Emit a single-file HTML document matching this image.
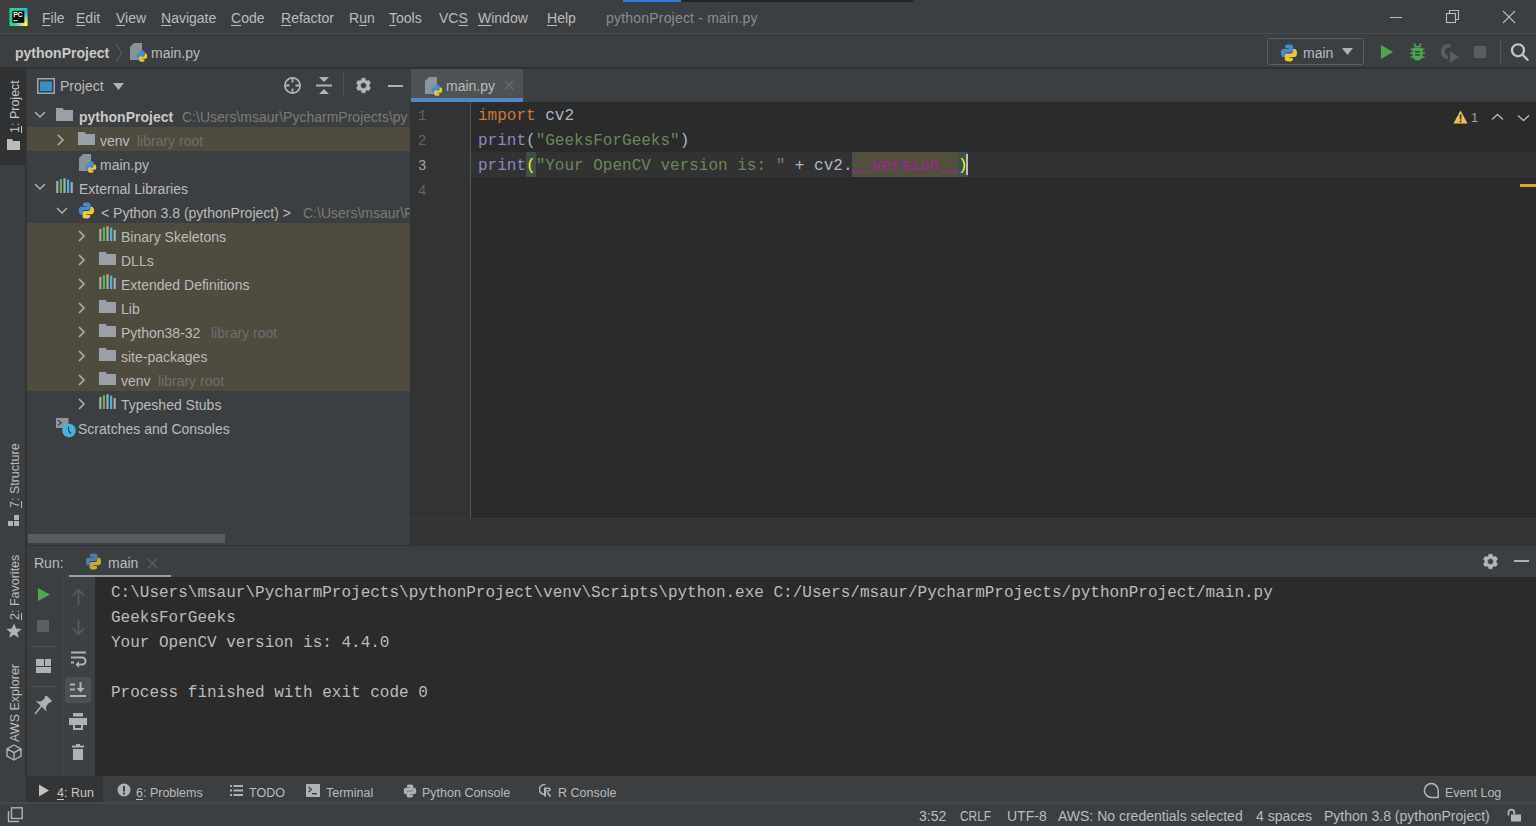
<!DOCTYPE html>
<html><head><meta charset="utf-8">
<style>
*{margin:0;padding:0;box-sizing:border-box}
html,body{width:1536px;height:826px;overflow:hidden;background:#3C3F41;font-family:"Liberation Sans",sans-serif;color:#BBBBBB}
.a{position:absolute}
.t{position:absolute;white-space:nowrap;font-size:14px;line-height:16px}
.v{position:absolute;white-space:nowrap;font-size:12.5px;line-height:14px;transform-origin:0 0;transform:rotate(-90deg)}
.code{position:absolute;white-space:pre;font-family:"Liberation Mono",monospace;font-size:16px;line-height:25px}
u{text-decoration:underline;text-underline-offset:2px;text-decoration-thickness:1px}
</style></head><body>
<div class="a" style="left:0px;top:0px;width:1536px;height:33px;background:#3C3F41;"></div>
<div class="a" style="left:0px;top:33px;width:1536px;height:1px;background:#4B4F51;"></div>
<svg class="a" style="left:9px;top:7px" width="19" height="19" viewBox="0 0 19 19" ><defs><linearGradient id="lg" x1="0" y1="0" x2="1" y2="0"><stop offset="0.3" stop-color="#21D789"/><stop offset="1" stop-color="#2FB4E0"/></linearGradient>
<radialGradient id="rg" cx="1" cy="1" r="0.75"><stop offset="0.2" stop-color="#FCF84A"/><stop offset="1" stop-color="#FCF84A" stop-opacity="0"/></radialGradient></defs>
<rect x="0.5" y="1" width="18" height="18" fill="url(#lg)"/><rect x="0.5" y="1" width="18" height="18" fill="url(#rg)"/><rect x="3.3" y="3.8" width="12" height="12" fill="#000"/>
<text x="4.2" y="10.3" font-family="Liberation Sans" font-weight="bold" font-size="7" fill="#fff" letter-spacing="-0.4">PC</text><rect x="4.5" y="13.2" width="4" height="1" fill="#fff"/></svg>
<div class="t" style="left:42px;top:10px;"><u>F</u>ile</div>
<div class="t" style="left:76px;top:10px;"><u>E</u>dit</div>
<div class="t" style="left:116px;top:10px;"><u>V</u>iew</div>
<div class="t" style="left:161px;top:10px;"><u>N</u>avigate</div>
<div class="t" style="left:231px;top:10px;"><u>C</u>ode</div>
<div class="t" style="left:281px;top:10px;"><u>R</u>efactor</div>
<div class="t" style="left:349px;top:10px;">R<u>u</u>n</div>
<div class="t" style="left:389px;top:10px;"><u>T</u>ools</div>
<div class="t" style="left:439px;top:10px;">VC<u>S</u></div>
<div class="t" style="left:478px;top:10px;"><u>W</u>indow</div>
<div class="t" style="left:547px;top:10px;"><u>H</u>elp</div>
<div class="t" style="left:606px;top:10px;color:#8A8C8E;letter-spacing:0.2px">pythonProject - main.py</div>
<div class="a" style="left:623px;top:0px;width:290px;height:2px;background:#232425;"></div>
<div class="a" style="left:623px;top:0px;width:58px;height:2px;background:#2F7ED8;"></div>
<div class="a" style="left:1390px;top:17px;width:12px;height:1px;background:#BBBBBB;"></div>
<svg class="a" style="left:1445px;top:9px" width="15" height="15" viewBox="0 0 15 15" fill="none" stroke="#BBBBBB" stroke-width="1.1"><rect x="1.5" y="4.5" width="9" height="9"/><path d="M4.5 4.5 V1.5 H13.5 V10.5 H10.5"/></svg>
<svg class="a" style="left:1502px;top:10px" width="14" height="14" viewBox="0 0 14 14" stroke="#BBBBBB" stroke-width="1.1"><path d="M1 1 L13 13 M13 1 L1 13"/></svg>
<div class="a" style="left:0px;top:34px;width:1536px;height:33px;background:#3C3F41;"></div>
<div class="a" style="left:0px;top:67px;width:1536px;height:2px;background:#323232;"></div>
<div class="t" style="left:15px;top:45px;font-weight:bold;color:#C8C8C8">pythonProject</div>
<svg class="a" style="left:115px;top:43px" width="8" height="20" viewBox="0 0 8 20" ><path d="M1 1 L6.5 10 L1 19" fill="none" stroke="#606366" stroke-width="1"/></svg>
<svg class="a" style="left:130px;top:43px" width="18" height="19" viewBox="0 0 18 19" ><path d="M4 0 H12 V17 H0 V4 Z" fill="#9AA7B0" opacity="0.8"/><g transform="translate(6 7.2) scale(0.66)"><path d="M8.8 0.5 C5 0.5 5.3 2.1 5.3 2.1 V4.2 H8.9 V4.9 H3.8 C3.8 4.9 1 4.6 1 8.9 C1 13.2 3.4 13.1 3.4 13.1 H4.9 V11.1 C4.9 11.1 4.8 8.6 7.3 8.6 H10.9 C10.9 8.6 13.2 8.6 13.2 6.4 V2.7 C13.2 2.7 13.5 0.5 8.8 0.5 Z" fill="#3E8ED0"/><path d="M9.2 17.5 C13 17.5 12.7 15.9 12.7 15.9 V13.8 H9.1 V13.1 H14.2 C14.2 13.1 17 13.4 17 9.1 C17 4.8 14.6 4.9 14.6 4.9 H13.1 V6.9 C13.1 6.9 13.2 9.4 10.7 9.4 H7.1 C7.1 9.4 4.8 9.4 4.8 11.6 V15.3 C4.8 15.3 4.5 17.5 9.2 17.5 Z" fill="#F2C62F"/></g></svg>
<div class="t" style="left:151px;top:45px;">main.py</div>
<div class="a" style="left:1267px;top:38px;width:97px;height:27px;background:#3C3F41;border:1px solid #5E6060;border-radius:3px"></div>
<svg class="a" style="left:1280px;top:44px" width="18" height="18" viewBox="0 0 18 18" ><path d="M8.8 0.5 C5 0.5 5.3 2.1 5.3 2.1 V4.2 H8.9 V4.9 H3.8 C3.8 4.9 1 4.6 1 8.9 C1 13.2 3.4 13.1 3.4 13.1 H4.9 V11.1 C4.9 11.1 4.8 8.6 7.3 8.6 H10.9 C10.9 8.6 13.2 8.6 13.2 6.4 V2.7 C13.2 2.7 13.5 0.5 8.8 0.5 Z" fill="#3E8ED0"/><path d="M9.2 17.5 C13 17.5 12.7 15.9 12.7 15.9 V13.8 H9.1 V13.1 H14.2 C14.2 13.1 17 13.4 17 9.1 C17 4.8 14.6 4.9 14.6 4.9 H13.1 V6.9 C13.1 6.9 13.2 9.4 10.7 9.4 H7.1 C7.1 9.4 4.8 9.4 4.8 11.6 V15.3 C4.8 15.3 4.5 17.5 9.2 17.5 Z" fill="#F2C62F"/></svg>
<div class="t" style="left:1303px;top:45px;">main</div>
<svg class="a" style="left:1342px;top:48px" width="11" height="8" viewBox="0 0 11 8" ><path d="M0 0 H11 L5.5 7 Z" fill="#AFB1B3"/></svg>
<svg class="a" style="left:1380px;top:44px" width="14" height="16" viewBox="0 0 14 16" ><path d="M1 1 L13 8 L1 15 Z" fill="#4DA453"/></svg>
<svg class="a" style="left:1409px;top:43px" width="17" height="18" viewBox="0 0 17 18" ><path d="M5 0.5 L6.5 3 M12 0.5 L10.5 3" stroke="#4DA453" stroke-width="1.5"/>
<path d="M4.5 4.5 C4.5 2.5 12.5 2.5 12.5 4.5 Z" fill="#4DA453"/>
<path d="M3.5 5 H13.5 V13 C13.5 15.5 11 17.5 8.5 17.5 C6 17.5 3.5 15.5 3.5 13 Z" fill="#4DA453"/>
<path d="M1.5 6.5 H15.5 M1 10.2 H16 M1.5 14 H15.5" stroke="#4DA453" stroke-width="1.6"/>
<path d="M6 8.8 H11 M6 12 H11" stroke="#2E4A30" stroke-width="1.4"/></svg>
<svg class="a" style="left:1439px;top:42px" width="22" height="22" viewBox="0 0 22 22" ><path d="M9 2 C4.5 2 2 5 2 9.5 C2 14 4.5 17 9 17 L9 13.5 C7 13.5 6 12 6 9.5 C6 7 7 5.5 9 5.5 H11.5 V2 Z" fill="#5A5D5F"/><path d="M11 9 L20 15 L11 21 Z" fill="#5A5D5F"/></svg>
<div class="a" style="left:1474px;top:46px;width:12px;height:12px;background:#5A5D5F;"></div>
<div class="a" style="left:1500px;top:40px;width:1px;height:24px;background:#515658;"></div>
<svg class="a" style="left:1509px;top:42px" width="21" height="21" viewBox="0 0 21 21" fill="none" stroke="#C4C4C4" stroke-width="2.3"><circle cx="9" cy="8.3" r="6"/><path d="M13.4 12.7 L18.6 17.8" stroke-linecap="round"/></svg>
<div class="a" style="left:0px;top:69px;width:26px;height:707px;background:#3C3F41;"></div>
<div class="a" style="left:0px;top:69px;width:25px;height:96px;background:#2F3133;"></div>
<div class="a" style="left:25px;top:69px;width:2px;height:707px;background:#323435;"></div>
<div class="v" style="left:8px;top:133px;color:#C8C8C8"><u>1</u>: Project</div>
<svg class="a" style="left:7px;top:139px" width="13" height="11" viewBox="0 0 13 11" ><path d="M0 0 H5 L6 2 H13 V11 H0 Z" fill="#BBBBBB"/></svg>
<div class="v" style="left:8px;top:508px"><u>7</u>: Structure</div>
<svg class="a" style="left:8px;top:515px" width="12" height="12" viewBox="0 0 12 12" fill="#AFB1B3"><rect x="6" y="0" width="5" height="5"/><rect x="0" y="6" width="5" height="5"/><rect x="6" y="6" width="5" height="5"/></svg>
<div class="v" style="left:8px;top:620px"><u>2</u>: Favorites</div>
<svg class="a" style="left:6px;top:623px" width="16" height="16" viewBox="0 0 16 16" ><path d="M8 0.5 L10.2 5.6 L15.6 5.9 L11.4 9.4 L12.8 14.8 L8 11.8 L3.2 14.8 L4.6 9.4 L0.4 5.9 L5.8 5.6 Z" fill="#AFB1B3"/></svg>
<div class="v" style="left:8px;top:742px">AWS Explorer</div>
<svg class="a" style="left:6px;top:744px" width="16" height="17" viewBox="0 0 16 17" fill="none" stroke="#AFB1B3" stroke-width="1.4" stroke-linejoin="round"><path d="M8 1 L15 4.8 V12.2 L8 16 L1 12.2 V4.8 Z M1 4.8 L8 8.6 L15 4.8 M8 8.6 V16"/></svg>
<div class="a" style="left:27px;top:69px;width:383px;height:476px;overflow:hidden"><div class="a" style="left:-27px;top:-69px;width:1536px;height:826px"><div class="a" style="left:27px;top:69px;width:384px;height:476px;background:#3C3F41;"></div><svg class="a" style="left:37px;top:78px" width="18" height="16" viewBox="0 0 18 16" ><rect x="0.75" y="0.75" width="16.5" height="14.5" fill="none" stroke="#9AA7B0" stroke-width="1.5"/><rect x="3" y="3.5" width="12" height="9.5" fill="#3592C4"/></svg><div class="t" style="left:60px;top:78px;">Project</div><svg class="a" style="left:113px;top:83px" width="11" height="8" viewBox="0 0 11 8" ><path d="M0 0 H11 L5.5 7 Z" fill="#AFB1B3"/></svg><svg class="a" style="left:283px;top:76px" width="19" height="19" viewBox="0 0 19 19" fill="none" stroke="#AFB1B3" stroke-width="1.8"><circle cx="9.5" cy="9.5" r="7.6"/><path d="M9.5 1.5 V6.5 M9.5 12.5 V17.5 M1.5 9.5 H6.5 M12.5 9.5 H17.5"/></svg><svg class="a" style="left:316px;top:77px" width="16" height="17" viewBox="0 0 16 17" fill="#AFB1B3"><path d="M3 0 H13 L8 5 Z M3 17 H13 L8 12 Z"/><rect x="0" y="7.5" width="16" height="2"/></svg><div class="a" style="left:343px;top:72px;width:1px;height:24px;background:#4E5254;"></div><svg class="a" style="left:355px;top:77px" width="17" height="17" viewBox="0 0 17 17" ><path fill="#B4B6B8" fill-rule="evenodd" stroke="#B4B6B8" stroke-width="0.6" stroke-linejoin="round" d="M10.54 13.82 L10.11 15.72 L6.89 15.72 L6.46 13.82 L4.91 12.93 L3.05 13.51 L1.44 10.71 L2.87 9.39 L2.87 7.61 L1.44 6.29 L3.05 3.49 L4.91 4.07 L6.46 3.18 L6.89 1.28 L10.11 1.28 L10.54 3.18 L12.09 4.07 L13.95 3.49 L15.56 6.29 L14.13 7.61 L14.13 9.39 L15.56 10.71 L13.95 13.51 L12.09 12.93 Z M11.5 8.5 A3.0 3.0 0 1 0 5.5 8.5 A3.0 3.0 0 1 0 11.5 8.5 Z"/></svg><div class="a" style="left:388px;top:85px;width:15px;height:2px;background:#AFB1B3;"></div><div class="a" style="left:27px;top:127px;width:383px;height:24px;background:#4F4B3F;"></div><div class="a" style="left:27px;top:223px;width:383px;height:168px;background:#4F4B3F;"></div><svg class="a" style="left:34px;top:111px" width="12" height="8" viewBox="0 0 12 8" ><path d="M1 1 L6 6 L11 1" fill="none" stroke="#AFB1B3" stroke-width="1.5"/></svg><svg class="a" style="left:56px;top:108px" width="17" height="14" viewBox="0 0 17 14" ><path d="M0 0 H6.5 L8 2 H17 V13 H0 Z" fill="#9AA1A6"/></svg><div class="t" style="left:79px;top:109px;font-weight:bold;color:#C8C8C8">pythonProject</div><div class="t" style="left:182px;top:109px;color:#7A7A7A">C:\Users\msaur\PycharmProjects\py</div><svg class="a" style="left:57px;top:134px" width="8" height="12" viewBox="0 0 8 12" ><path d="M1 1 L6 6 L1 11" fill="none" stroke="#AFB1B3" stroke-width="1.5"/></svg><svg class="a" style="left:78px;top:132px" width="17" height="14" viewBox="0 0 17 14" ><path d="M0 0 H6.5 L8 2 H17 V13 H0 Z" fill="#9AA1A6"/></svg><div class="t" style="left:100px;top:133px;">venv</div><div class="t" style="left:137px;top:133px;color:#6E6E6E">library root</div><svg class="a" style="left:79px;top:154px" width="18" height="19" viewBox="0 0 18 19" ><path d="M4 0 H12 V17 H0 V4 Z" fill="#9AA7B0" opacity="0.8"/><g transform="translate(6 7.2) scale(0.66)"><path d="M8.8 0.5 C5 0.5 5.3 2.1 5.3 2.1 V4.2 H8.9 V4.9 H3.8 C3.8 4.9 1 4.6 1 8.9 C1 13.2 3.4 13.1 3.4 13.1 H4.9 V11.1 C4.9 11.1 4.8 8.6 7.3 8.6 H10.9 C10.9 8.6 13.2 8.6 13.2 6.4 V2.7 C13.2 2.7 13.5 0.5 8.8 0.5 Z" fill="#3E8ED0"/><path d="M9.2 17.5 C13 17.5 12.7 15.9 12.7 15.9 V13.8 H9.1 V13.1 H14.2 C14.2 13.1 17 13.4 17 9.1 C17 4.8 14.6 4.9 14.6 4.9 H13.1 V6.9 C13.1 6.9 13.2 9.4 10.7 9.4 H7.1 C7.1 9.4 4.8 9.4 4.8 11.6 V15.3 C4.8 15.3 4.5 17.5 9.2 17.5 Z" fill="#F2C62F"/></g></svg><div class="t" style="left:100px;top:157px;">main.py</div><svg class="a" style="left:34px;top:183px" width="12" height="8" viewBox="0 0 12 8" ><path d="M1 1 L6 6 L11 1" fill="none" stroke="#AFB1B3" stroke-width="1.5"/></svg><svg class="a" style="left:56px;top:178px" width="18" height="15" viewBox="0 0 18 15" ><rect x="0.2" y="3" width="2.2" height="12" fill="#A4ABB2"/><rect x="3.8" y="1.2" width="2.2" height="13.8" fill="#62B543"/><rect x="7.4" y="0.3" width="2.2" height="14.7" fill="#A4ABB2"/><rect x="11" y="1.6" width="2.2" height="13.4" fill="#40B6E0"/><rect x="14.6" y="4" width="2.2" height="11" fill="#A4ABB2"/></svg><div class="t" style="left:79px;top:181px;">External Libraries</div><svg class="a" style="left:56px;top:207px" width="12" height="8" viewBox="0 0 12 8" ><path d="M1 1 L6 6 L11 1" fill="none" stroke="#AFB1B3" stroke-width="1.5"/></svg><svg class="a" style="left:78px;top:202px" width="17" height="17" viewBox="0 0 18 18" ><path d="M8.8 0.5 C5 0.5 5.3 2.1 5.3 2.1 V4.2 H8.9 V4.9 H3.8 C3.8 4.9 1 4.6 1 8.9 C1 13.2 3.4 13.1 3.4 13.1 H4.9 V11.1 C4.9 11.1 4.8 8.6 7.3 8.6 H10.9 C10.9 8.6 13.2 8.6 13.2 6.4 V2.7 C13.2 2.7 13.5 0.5 8.8 0.5 Z" fill="#3E8ED0"/><path d="M9.2 17.5 C13 17.5 12.7 15.9 12.7 15.9 V13.8 H9.1 V13.1 H14.2 C14.2 13.1 17 13.4 17 9.1 C17 4.8 14.6 4.9 14.6 4.9 H13.1 V6.9 C13.1 6.9 13.2 9.4 10.7 9.4 H7.1 C7.1 9.4 4.8 9.4 4.8 11.6 V15.3 C4.8 15.3 4.5 17.5 9.2 17.5 Z" fill="#F2C62F"/></svg><div class="t" style="left:101px;top:205px;">&lt; Python 3.8 (pythonProject) &gt;</div><div class="t" style="left:303px;top:205px;color:#7A7A7A">C:\Users\msaur\PycharmProjects</div><svg class="a" style="left:78px;top:230px" width="8" height="12" viewBox="0 0 8 12" ><path d="M1 1 L6 6 L1 11" fill="none" stroke="#AFB1B3" stroke-width="1.5"/></svg><svg class="a" style="left:99px;top:226px" width="18" height="15" viewBox="0 0 18 15" ><rect x="0.2" y="3" width="2.2" height="12" fill="#A4ABB2"/><rect x="3.8" y="1.2" width="2.2" height="13.8" fill="#62B543"/><rect x="7.4" y="0.3" width="2.2" height="14.7" fill="#A4ABB2"/><rect x="11" y="1.6" width="2.2" height="13.4" fill="#40B6E0"/><rect x="14.6" y="4" width="2.2" height="11" fill="#A4ABB2"/></svg><div class="t" style="left:121px;top:229px;">Binary Skeletons</div><svg class="a" style="left:78px;top:254px" width="8" height="12" viewBox="0 0 8 12" ><path d="M1 1 L6 6 L1 11" fill="none" stroke="#AFB1B3" stroke-width="1.5"/></svg><svg class="a" style="left:99px;top:252px" width="17" height="14" viewBox="0 0 17 14" ><path d="M0 0 H6.5 L8 2 H17 V13 H0 Z" fill="#9AA1A6"/></svg><div class="t" style="left:121px;top:253px;">DLLs</div><svg class="a" style="left:78px;top:278px" width="8" height="12" viewBox="0 0 8 12" ><path d="M1 1 L6 6 L1 11" fill="none" stroke="#AFB1B3" stroke-width="1.5"/></svg><svg class="a" style="left:99px;top:274px" width="18" height="15" viewBox="0 0 18 15" ><rect x="0.2" y="3" width="2.2" height="12" fill="#A4ABB2"/><rect x="3.8" y="1.2" width="2.2" height="13.8" fill="#62B543"/><rect x="7.4" y="0.3" width="2.2" height="14.7" fill="#A4ABB2"/><rect x="11" y="1.6" width="2.2" height="13.4" fill="#40B6E0"/><rect x="14.6" y="4" width="2.2" height="11" fill="#A4ABB2"/></svg><div class="t" style="left:121px;top:277px;">Extended Definitions</div><svg class="a" style="left:78px;top:302px" width="8" height="12" viewBox="0 0 8 12" ><path d="M1 1 L6 6 L1 11" fill="none" stroke="#AFB1B3" stroke-width="1.5"/></svg><svg class="a" style="left:99px;top:300px" width="17" height="14" viewBox="0 0 17 14" ><path d="M0 0 H6.5 L8 2 H17 V13 H0 Z" fill="#9AA1A6"/></svg><div class="t" style="left:121px;top:301px;">Lib</div><svg class="a" style="left:78px;top:326px" width="8" height="12" viewBox="0 0 8 12" ><path d="M1 1 L6 6 L1 11" fill="none" stroke="#AFB1B3" stroke-width="1.5"/></svg><svg class="a" style="left:99px;top:324px" width="17" height="14" viewBox="0 0 17 14" ><path d="M0 0 H6.5 L8 2 H17 V13 H0 Z" fill="#9AA1A6"/></svg><div class="t" style="left:121px;top:325px;">Python38-32</div><div class="t" style="left:211px;top:325px;color:#6E6E6E">library root</div><svg class="a" style="left:78px;top:350px" width="8" height="12" viewBox="0 0 8 12" ><path d="M1 1 L6 6 L1 11" fill="none" stroke="#AFB1B3" stroke-width="1.5"/></svg><svg class="a" style="left:99px;top:348px" width="17" height="14" viewBox="0 0 17 14" ><path d="M0 0 H6.5 L8 2 H17 V13 H0 Z" fill="#9AA1A6"/></svg><div class="t" style="left:121px;top:349px;">site-packages</div><svg class="a" style="left:78px;top:374px" width="8" height="12" viewBox="0 0 8 12" ><path d="M1 1 L6 6 L1 11" fill="none" stroke="#AFB1B3" stroke-width="1.5"/></svg><svg class="a" style="left:99px;top:372px" width="17" height="14" viewBox="0 0 17 14" ><path d="M0 0 H6.5 L8 2 H17 V13 H0 Z" fill="#9AA1A6"/></svg><div class="t" style="left:121px;top:373px;">venv</div><div class="t" style="left:158px;top:373px;color:#6E6E6E">library root</div><svg class="a" style="left:78px;top:398px" width="8" height="12" viewBox="0 0 8 12" ><path d="M1 1 L6 6 L1 11" fill="none" stroke="#AFB1B3" stroke-width="1.5"/></svg><svg class="a" style="left:99px;top:394px" width="18" height="15" viewBox="0 0 18 15" ><rect x="0.2" y="3" width="2.2" height="12" fill="#A4ABB2"/><rect x="3.8" y="1.2" width="2.2" height="13.8" fill="#62B543"/><rect x="7.4" y="0.3" width="2.2" height="14.7" fill="#A4ABB2"/><rect x="11" y="1.6" width="2.2" height="13.4" fill="#40B6E0"/><rect x="14.6" y="4" width="2.2" height="11" fill="#A4ABB2"/></svg><div class="t" style="left:121px;top:397px;">Typeshed Stubs</div><svg class="a" style="left:56px;top:418px" width="20" height="20" viewBox="0 0 20 20" ><rect x="0" y="0" width="12.5" height="10" fill="#9AA7B0" opacity="0.85"/><path d="M2 2.2 L5.2 4.8 L2 7.4" stroke="#3C3F41" stroke-width="1.2" fill="none"/><circle cx="13" cy="12.5" r="6.8" fill="#40B6E0"/><path d="M12.5 8.5 V13 L15 15.5" stroke="#233A45" stroke-width="1.2" fill="none"/></svg><div class="t" style="left:78px;top:421px;">Scratches and Consoles</div><div class="a" style="left:28px;top:534px;width:197px;height:9px;background:#595B5D;"></div></div></div>
<div class="a" style="left:411px;top:69px;width:1125px;height:32px;background:#3C3F41;"></div>
<div class="a" style="left:411px;top:69px;width:112px;height:33px;background:#4E5254;"></div>
<div class="a" style="left:411px;top:98px;width:112px;height:4px;background:#4A88C7;"></div>
<svg class="a" style="left:425px;top:77px" width="18" height="19" viewBox="0 0 18 19" ><path d="M4 0 H12 V17 H0 V4 Z" fill="#9AA7B0" opacity="0.8"/><g transform="translate(6 7.2) scale(0.66)"><path d="M8.8 0.5 C5 0.5 5.3 2.1 5.3 2.1 V4.2 H8.9 V4.9 H3.8 C3.8 4.9 1 4.6 1 8.9 C1 13.2 3.4 13.1 3.4 13.1 H4.9 V11.1 C4.9 11.1 4.8 8.6 7.3 8.6 H10.9 C10.9 8.6 13.2 8.6 13.2 6.4 V2.7 C13.2 2.7 13.5 0.5 8.8 0.5 Z" fill="#3E8ED0"/><path d="M9.2 17.5 C13 17.5 12.7 15.9 12.7 15.9 V13.8 H9.1 V13.1 H14.2 C14.2 13.1 17 13.4 17 9.1 C17 4.8 14.6 4.9 14.6 4.9 H13.1 V6.9 C13.1 6.9 13.2 9.4 10.7 9.4 H7.1 C7.1 9.4 4.8 9.4 4.8 11.6 V15.3 C4.8 15.3 4.5 17.5 9.2 17.5 Z" fill="#F2C62F"/></g></svg>
<div class="t" style="left:446px;top:78px;">main.py</div>
<svg class="a" style="left:504px;top:80px" width="10" height="10" viewBox="0 0 10 10" ><path d="M1 1 L9 9 M9 1 L1 9" stroke="#6E7072" stroke-width="1.2"/></svg>
<div class="a" style="left:410px;top:102px;width:61px;height:443px;background:#313335;"></div>
<div class="a" style="left:471px;top:102px;width:1065px;height:416px;background:#2B2B2B;"></div>
<div class="a" style="left:471px;top:518px;width:1065px;height:27px;background:#313335;"></div>
<div class="a" style="left:410px;top:518px;width:1126px;height:1px;background:#393B3D;"></div>
<div class="a" style="left:470px;top:102px;width:1px;height:416px;background:#555555;"></div>
<div class="a" style="left:471px;top:152px;width:1065px;height:25px;background:#323232;"></div>
<div class="code" style="left:418px;top:104px;font-size:14px;color:#606366">1</div>
<div class="code" style="left:418px;top:129px;font-size:14px;color:#606366">2</div>
<div class="code" style="left:418px;top:154px;font-size:14px;color:#A4A3A3">3</div>
<div class="code" style="left:418px;top:179px;font-size:14px;color:#606366">4</div>
<div class="a" style="left:526.0px;top:152px;width:9.6px;height:25px;background:#3B514D;"></div>
<div class="a" style="left:852.4px;top:152px;width:105.6px;height:25px;background:#52503A;"></div>
<div class="a" style="left:958.0px;top:152px;width:9.6px;height:25px;background:#3B514D;"></div>
<div class="a" style="left:966px;top:154px;width:2px;height:21px;background:#BBBBBB;"></div>
<div class="code" style="left:478px;top:104px;color:#A9B7C6"><span style="color:#CC7832">import</span> cv2
<span style="color:#8888C6">print</span>(<span style="color:#6A8759">"GeeksForGeeks"</span>)
<span style="color:#8888C6">print</span><span style="color:#FFEF28">(</span><span style="color:#6A8759">"Your OpenCV version is: "</span> + cv2.<span style="color:#A51FA5">__version__</span><span style="color:#FFEF28">)</span>
</div>
<svg class="a" style="left:1453px;top:110px" width="15" height="14" viewBox="0 0 15 14" ><path d="M7.5 0.5 L14.5 13.5 H0.5 Z" fill="#EDC24A"/><rect x="6.7" y="4.5" width="1.7" height="5" fill="#3A2A00"/><rect x="6.7" y="10.6" width="1.7" height="1.7" fill="#3A2A00"/></svg>
<div class="t" style="left:1471px;top:110px;font-size:13px;color:#A0A0A0">1</div>
<svg class="a" style="left:1491px;top:113px" width="13" height="8" viewBox="0 0 13 8" ><path d="M1 6.5 L6.5 1.5 L12 6.5" fill="none" stroke="#AFB1B3" stroke-width="1.5"/></svg>
<svg class="a" style="left:1517px;top:114px" width="13" height="8" viewBox="0 0 13 8" ><path d="M1 1.5 L6.5 6.5 L12 1.5" fill="none" stroke="#AFB1B3" stroke-width="1.5"/></svg>
<div class="a" style="left:1520px;top:184px;width:16px;height:3px;background:#D9A62E;"></div>
<div class="a" style="left:27px;top:545px;width:1509px;height:1px;background:#323232;"></div>
<div class="a" style="left:27px;top:546px;width:1509px;height:31px;background:#3C3F41;"></div>
<div class="t" style="left:34px;top:555px;">Run:</div>
<svg class="a" style="left:85px;top:553px" width="17" height="17" viewBox="0 0 18 18" ><path d="M8.8 0.5 C5 0.5 5.3 2.1 5.3 2.1 V4.2 H8.9 V4.9 H3.8 C3.8 4.9 1 4.6 1 8.9 C1 13.2 3.4 13.1 3.4 13.1 H4.9 V11.1 C4.9 11.1 4.8 8.6 7.3 8.6 H10.9 C10.9 8.6 13.2 8.6 13.2 6.4 V2.7 C13.2 2.7 13.5 0.5 8.8 0.5 Z" fill="#4E7DA5"/><path d="M9.2 17.5 C13 17.5 12.7 15.9 12.7 15.9 V13.8 H9.1 V13.1 H14.2 C14.2 13.1 17 13.4 17 9.1 C17 4.8 14.6 4.9 14.6 4.9 H13.1 V6.9 C13.1 6.9 13.2 9.4 10.7 9.4 H7.1 C7.1 9.4 4.8 9.4 4.8 11.6 V15.3 C4.8 15.3 4.5 17.5 9.2 17.5 Z" fill="#C9A935"/></svg>
<div class="t" style="left:108px;top:555px;">main</div>
<svg class="a" style="left:147px;top:558px" width="11" height="11" viewBox="0 0 11 11" ><path d="M1 1 L10 10 M10 1 L1 10" stroke="#5E6060" stroke-width="1.2"/></svg>
<div class="a" style="left:69px;top:575px;width:102px;height:3px;background:#9A9D9F;"></div>
<svg class="a" style="left:1482px;top:553px" width="17" height="17" viewBox="0 0 17 17" ><path fill="#B4B6B8" fill-rule="evenodd" stroke="#B4B6B8" stroke-width="0.6" stroke-linejoin="round" d="M10.54 13.82 L10.11 15.72 L6.89 15.72 L6.46 13.82 L4.91 12.93 L3.05 13.51 L1.44 10.71 L2.87 9.39 L2.87 7.61 L1.44 6.29 L3.05 3.49 L4.91 4.07 L6.46 3.18 L6.89 1.28 L10.11 1.28 L10.54 3.18 L12.09 4.07 L13.95 3.49 L15.56 6.29 L14.13 7.61 L14.13 9.39 L15.56 10.71 L13.95 13.51 L12.09 12.93 Z M11.5 8.5 A3.0 3.0 0 1 0 5.5 8.5 A3.0 3.0 0 1 0 11.5 8.5 Z"/></svg>
<div class="a" style="left:1514px;top:560px;width:15px;height:2px;background:#AFB1B3;"></div>
<div class="a" style="left:27px;top:577px;width:32px;height:199px;background:#3C3F41;"></div>
<div class="a" style="left:59px;top:577px;width:1px;height:199px;background:#35383A;"></div>
<div class="a" style="left:60px;top:577px;width:35px;height:199px;background:#3E4143;"></div>
<div class="a" style="left:95px;top:577px;width:1441px;height:199px;background:#2B2B2B;"></div>
<svg class="a" style="left:37px;top:587px" width="14" height="15" viewBox="0 0 14 15" ><path d="M1 1 L13 7.5 L1 14 Z" fill="#4FA653"/></svg>
<div class="a" style="left:37px;top:620px;width:12px;height:12px;background:#5E5E5E;"></div>
<div class="a" style="left:31px;top:646px;width:25px;height:1px;background:#4E5254;"></div>
<svg class="a" style="left:36px;top:659px" width="15" height="14" viewBox="0 0 15 14" fill="#AFB1B3"><rect x="0" y="0" width="8" height="7"/><rect x="9" y="0" width="6" height="7"/><rect x="0" y="8" width="15" height="6"/></svg>
<div class="a" style="left:31px;top:686px;width:25px;height:1px;background:#4E5254;"></div>
<svg class="a" style="left:34px;top:696px" width="18" height="19" viewBox="0 0 18 19" ><path d="M17 5 L12 0 L10.5 4 L6.5 6.5 L4 6 L11.5 13.5 L11 11 L13.5 7 Z M7.5 10 L1 18" fill="#AFB1B3" stroke="#AFB1B3" stroke-width="1.5"/></svg>
<svg class="a" style="left:72px;top:589px" width="13" height="16" viewBox="0 0 13 16" ><path d="M1 6.5 L6.5 1 L12 6.5 M6.5 1.5 V16" fill="none" stroke="#5A5D5F" stroke-width="1.6"/></svg>
<svg class="a" style="left:72px;top:620px" width="13" height="15" viewBox="0 0 13 15" ><path d="M1 8.5 L6.5 14 L12 8.5 M6.5 13.5 V0" fill="none" stroke="#5A5D5F" stroke-width="1.6"/></svg>
<svg class="a" style="left:70px;top:651px" width="17" height="17" viewBox="0 0 17 17" fill="#AFB1B3"><rect x="1" y="0.5" width="15" height="2"/><rect x="1" y="5.5" width="9" height="2"/><rect x="1" y="10.5" width="3" height="2"/><path d="M10 6.5 H12 A3.5 3.5 0 0 1 12 13.5 H7.5" fill="none" stroke="#AFB1B3" stroke-width="2"/><path d="M9 10 L5.5 13.5 L9 17 Z"/></svg>
<div class="a" style="left:65px;top:677px;width:26px;height:26px;background:#4C5052;border-radius:3px"></div>
<svg class="a" style="left:70px;top:682px" width="16" height="16" viewBox="0 0 16 16" fill="#AFB1B3"><rect x="0" y="1.5" width="5" height="2"/><rect x="0" y="6.5" width="5" height="2"/><rect x="0" y="13" width="16" height="2"/><path d="M10.5 0 V9" stroke="#AFB1B3" stroke-width="2"/><path d="M6.5 6 L10.5 10.5 L14.5 6 Z"/></svg>
<svg class="a" style="left:69px;top:713px" width="18" height="17" viewBox="0 0 18 17" fill="#AFB1B3"><rect x="4" y="0" width="10" height="3.5"/><rect x="0" y="5" width="18" height="7"/><rect x="4" y="10" width="10" height="7"/><rect x="6" y="12" width="6" height="3" fill="#3E4143"/></svg>
<svg class="a" style="left:72px;top:744px" width="12" height="16" viewBox="0 0 12 16" fill="#AFB1B3"><rect x="0" y="1.5" width="12" height="2"/><rect x="4" y="0" width="4" height="2"/><path d="M1 5 H11 V16 H1 Z"/></svg>
<div class="code" style="left:111px;top:581px;color:#BBBBBB">C:\Users\msaur\PycharmProjects\pythonProject\venv\Scripts\python.exe C:/Users/msaur/PycharmProjects/pythonProject/main.py
GeeksForGeeks
Your OpenCV version is: 4.4.0

Process finished with exit code 0
</div>
<div class="a" style="left:0px;top:776px;width:1536px;height:26px;background:#3C3F41;"></div>
<div class="a" style="left:0px;top:776px;width:1536px;height:1px;background:#404345;"></div>
<div class="a" style="left:26px;top:776px;width:77px;height:26px;background:#323436;"></div>
<svg class="a" style="left:39px;top:784px" width="10" height="13" viewBox="0 0 10 13" ><path d="M0 0.5 L10 6.5 L0 12.5 Z" fill="#C0C2C4"/></svg>
<div class="t" style="left:57px;top:785px;font-size:12.5px;color:#C8C8C8"><u>4</u>: Run</div>
<svg class="a" style="left:117px;top:783px" width="14" height="14" viewBox="0 0 14 14" ><circle cx="7" cy="7" r="6.5" fill="#AFB1B3"/><rect x="6" y="3" width="2" height="5.5" fill="#3C3F41"/><rect x="6" y="9.5" width="2" height="2" fill="#3C3F41"/></svg>
<div class="t" style="left:136px;top:785px;font-size:12.5px"><u>6</u>: Problems</div>
<svg class="a" style="left:230px;top:785px" width="13" height="11" viewBox="0 0 13 11" fill="#AFB1B3"><rect x="0" y="0" width="2" height="2"/><rect x="0" y="4.5" width="2" height="2"/><rect x="0" y="9" width="2" height="2"/><rect x="3.5" y="0" width="9.5" height="2"/><rect x="3.5" y="4.5" width="9.5" height="2"/><rect x="3.5" y="9" width="9.5" height="2"/></svg>
<div class="t" style="left:249px;top:785px;font-size:12.5px">TODO</div>
<svg class="a" style="left:306px;top:784px" width="14" height="13" viewBox="0 0 14 13" ><rect x="0" y="0" width="14" height="13" fill="#AFB1B3"/><path d="M2.5 3 L5.5 5.5 L2.5 8" stroke="#3C3F41" stroke-width="1.3" fill="none"/><rect x="6" y="9" width="5" height="1.4" fill="#3C3F41"/></svg>
<div class="t" style="left:326px;top:785px;font-size:12.5px">Terminal</div>
<svg class="a" style="left:403px;top:784px" width="14" height="14" viewBox="0 0 18 18" ><path d="M8.8 0.5 C5 0.5 5.3 2.1 5.3 2.1 V4.2 H8.9 V4.9 H3.8 C3.8 4.9 1 4.6 1 8.9 C1 13.2 3.4 13.1 3.4 13.1 H4.9 V11.1 C4.9 11.1 4.8 8.6 7.3 8.6 H10.9 C10.9 8.6 13.2 8.6 13.2 6.4 V2.7 C13.2 2.7 13.5 0.5 8.8 0.5 Z" fill="#AFB1B3"/><path d="M9.2 17.5 C13 17.5 12.7 15.9 12.7 15.9 V13.8 H9.1 V13.1 H14.2 C14.2 13.1 17 13.4 17 9.1 C17 4.8 14.6 4.9 14.6 4.9 H13.1 V6.9 C13.1 6.9 13.2 9.4 10.7 9.4 H7.1 C7.1 9.4 4.8 9.4 4.8 11.6 V15.3 C4.8 15.3 4.5 17.5 9.2 17.5 Z" fill="#AFB1B3"/></svg>
<div class="t" style="left:422px;top:785px;font-size:12.5px">Python Console</div>
<svg class="a" style="left:539px;top:784px" width="13" height="13" viewBox="0 0 13 13" ><path d="M6.5 0.5 C3 0.5 0.5 2.5 0.5 5.5 C0.5 8 2.5 10 5.5 10.5" fill="none" stroke="#AFB1B3" stroke-width="1.6"/><path d="M5 3.5 H9.5 C11 3.5 11.8 4.5 11.8 5.6 C11.8 6.8 11 7.6 9.5 7.6 H7 V12.5 H5 Z M7 5 V6.3 H9.3 C9.8 6.3 10 6 10 5.6 C10 5.3 9.8 5 9.3 5 Z M9 8 L12.5 12.5 H10.2 L7.5 8.5 Z" fill="#AFB1B3"/></svg>
<div class="t" style="left:558px;top:785px;font-size:12.5px">R Console</div>
<svg class="a" style="left:1423px;top:782px" width="18" height="18" viewBox="0 0 18 18" ><path d="M15.2 8.5 A6.9 6.9 0 1 0 8.3 15.4 H15.2 Z" fill="none" stroke="#B4B6B8" stroke-width="1.5" stroke-linejoin="round"/></svg>
<div class="t" style="left:1445px;top:785px;font-size:12.5px">Event Log</div>
<div class="a" style="left:0px;top:802px;width:1536px;height:24px;background:#3C3F41;"></div>
<div class="a" style="left:0px;top:802px;width:1536px;height:2px;background:#45484A;"></div>
<svg class="a" style="left:7px;top:807px" width="16" height="16" viewBox="0 0 16 16" ><rect x="4.5" y="0.8" width="10.7" height="10.7" fill="none" stroke="#AFB1B3" stroke-width="1.4"/><path d="M1.5 4 V14.5 H12" fill="none" stroke="#AFB1B3" stroke-width="1.4"/></svg>
<div class="t" style="left:919px;top:808px;">3:52</div>
<div class="t" style="left:1007px;top:808px;">UTF-8</div>
<div class="t" style="left:1058px;top:808px;">AWS: No credentials selected</div>
<div class="t" style="left:1256px;top:808px;">4 spaces</div>
<div class="t" style="left:1324px;top:808px;">Python 3.8 (pythonProject)</div>
<div class="t" style="left:960px;top:808px;transform:scaleX(0.85);transform-origin:0 0">CRLF</div>
<svg class="a" style="left:1506px;top:808px" width="17" height="16" viewBox="0 0 17 16" ><path d="M2.5 7.5 V4.5 A2.9 2.9 0 0 1 8.3 4.5 V6.5" fill="none" stroke="#B4B6B8" stroke-width="1.7"/><rect x="5" y="6.5" width="10" height="7" fill="#B4B6B8"/></svg>
</body></html>
